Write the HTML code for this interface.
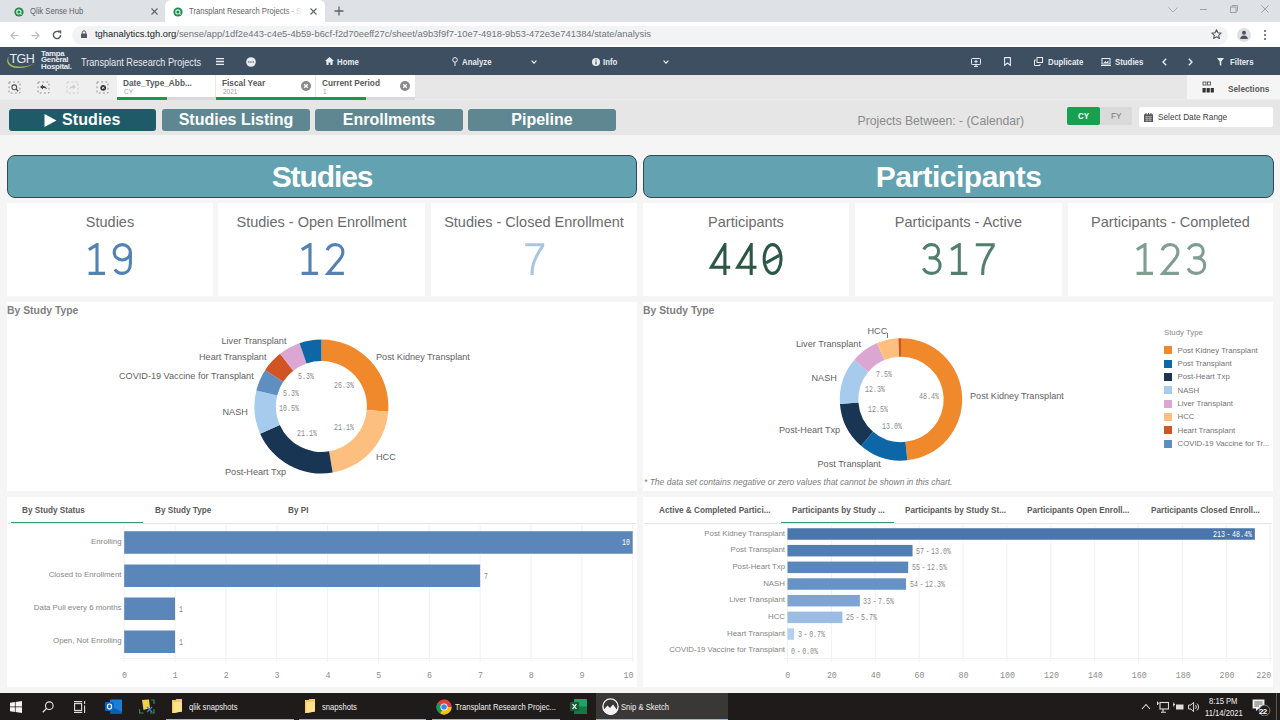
<!DOCTYPE html>
<html><head><meta charset="utf-8">
<style>
*{box-sizing:border-box;margin:0;padding:0}
html,body{width:1280px;height:720px;overflow:hidden;background:#f5f5f5;font-family:"Liberation Sans",sans-serif;position:relative}
.a{position:absolute}
.nw{white-space:nowrap}
.cz2{transform:scaleX(0.87);transform-origin:0 0}
.hx{top:56.8px;font-size:9px;font-weight:bold;color:#e8ecf0;transform:scaleX(0.87);transform-origin:0 0}
.st{top:78px;font-size:9px;font-weight:bold;color:#595959;transform:scaleX(0.92);transform-origin:0 0}
.sv{top:87.6px;font-size:6.5px;color:#a0a0a0}
.bst{font-size:10.4px;font-weight:bold;color:#7f7f7f;margin-top:1.5px}
.dl{font-size:9.15px;color:#626262;margin-top:1px}
.dp{font-family:"Liberation Mono",monospace;font-size:8.3px;color:#8a8a8a;transform:scaleX(0.8);transform-origin:0 0;margin-top:0.3px}
.lgt{font-size:7.8px;color:#8a8a8a}
.lgi{font-size:7.8px;color:#737373}
.tb{font-size:9px;font-weight:bold;color:#595959;transform:scaleX(0.91);transform-origin:0 0}
.bl{font-size:7.85px;color:#858585}
.bv{font-family:"Liberation Mono",monospace;font-size:8.3px;color:#8a8a8a;transform:scaleX(0.8);transform-origin:0 0;word-spacing:-3px;margin-top:-0.6px}
.ax{font-family:"Liberation Mono",monospace;font-size:8.3px;color:#8c8c8c;margin-top:-0.5px}
.tk{top:701.5px;font-size:9px;color:#f0f0f0;transform:scaleX(0.85);transform-origin:0 0}
.cz{transform:scaleX(0.85);transform-origin:0 0}
/* chrome */
#tabs{left:0;top:0;width:1280px;height:22px;background:#dee1e6}
#addr{left:0;top:22px;width:1280px;height:25px;background:#fff}
#qhead{left:0;top:47px;width:1280px;height:28px;background:#3e4f62}
#selbar{left:0;top:75px;width:1280px;height:25px;background:#e7e7e7;border-bottom:1px solid #ececec}
#band{left:0;top:100px;width:1280px;height:35px;background:#e6e6e6}
#task{left:0;top:693px;width:1280px;height:27px;background:#1f1b1b}
.navbtn{top:109px;height:22px;border-radius:3px;background:#5e8791;color:#fff;font-weight:bold;font-size:16px;text-align:center;line-height:22px;letter-spacing:0}
.hdr{top:155px;height:43px;background:#62a2b1;border:1px solid #34494f;border-radius:8px;color:#fff;font-weight:bold;font-size:30px;text-align:center;line-height:41px;letter-spacing:-1.1px}
.card{background:#fff}
.kt{font-size:14.5px;color:#6b6b6b;text-align:center;width:100%;top:11.3px}
.kv{font-family:"Liberation Mono",monospace;font-size:44px;text-align:center;width:100%;top:32px}
</style></head><body>
<div id="tabs" class="a"></div>
<div id="addr" class="a"></div>

<!-- browser tabs -->
<svg class="a" style="left:14px;top:7px" width="10" height="10" viewBox="0 0 10 10"><circle cx="5" cy="5" r="4.6" fill="#1f8a4c"/><circle cx="4.9" cy="4.9" r="2.1" fill="none" stroke="#d8f0df" stroke-width="1.2"/><path d="M6.2 6.2L7.6 7.6" stroke="#d8f0df" stroke-width="1.2"/></svg>
<div class="a nw cz" style="left:30px;top:6px;font-size:9px;color:#5f6368">Qlik Sense Hub</div>
<svg class="a" style="left:151px;top:8px" width="7" height="7" viewBox="0 0 7 7"><path d="M0.5 0.5L6.5 6.5M6.5 0.5L0.5 6.5" stroke="#5f6368" stroke-width="1.1"/></svg>
<div class="a" style="left:165px;top:0;width:160px;height:23px;background:#fff;border-radius:6px 6px 0 0"></div>
<svg class="a" style="left:173px;top:7px" width="10" height="10" viewBox="0 0 10 10"><circle cx="5" cy="5" r="4.6" fill="#1f8a4c"/><circle cx="4.9" cy="4.9" r="2.1" fill="none" stroke="#d8f0df" stroke-width="1.2"/><path d="M6.2 6.2L7.6 7.6" stroke="#d8f0df" stroke-width="1.2"/></svg>
<div class="a nw cz" style="left:189px;top:6px;font-size:9px;color:#5f6368">Transplant Research Projects - St</div>
<div class="a" style="left:285px;top:2px;width:22px;height:18px;background:linear-gradient(90deg,rgba(255,255,255,0),#fff 80%)"></div>
<svg class="a" style="left:310px;top:8px" width="7" height="7" viewBox="0 0 7 7"><path d="M0.5 0.5L6.5 6.5M6.5 0.5L0.5 6.5" stroke="#5f6368" stroke-width="1.1"/></svg>
<svg class="a" style="left:334px;top:6px" width="10" height="10" viewBox="0 0 10 10"><path d="M5 0.5V9.5M0.5 5H9.5" stroke="#5f6368" stroke-width="1.3"/></svg>
<svg class="a" style="left:1168px;top:7px" width="10" height="6" viewBox="0 0 10 6"><path d="M0.5 0.5L5 5L9.5 0.5" fill="none" stroke="#a6abb0" stroke-width="1"/></svg>
<div class="a" style="left:1200px;top:9px;width:7px;height:1px;background:#9ea2a7"></div>
<svg class="a" style="left:1230px;top:5px" width="8" height="8" viewBox="0 0 8 8"><rect x="0.5" y="2" width="5.5" height="5.5" fill="none" stroke="#9ea2a7" stroke-width="1"/><path d="M2 2V0.5H7.5V6H6" fill="none" stroke="#9ea2a7" stroke-width="1"/></svg>
<svg class="a" style="left:1261px;top:5px" width="8" height="8" viewBox="0 0 8 8"><path d="M0.5 0.5L7.5 7.5M7.5 0.5L0.5 7.5" stroke="#9ea2a7" stroke-width="1"/></svg>
<!-- address -->
<svg class="a" style="left:10px;top:31px" width="9" height="9" viewBox="0 0 9 9"><path d="M8.5 4.5H1M4.5 1L1 4.5L4.5 8" fill="none" stroke="#b8bbbf" stroke-width="1.2"/></svg>
<svg class="a" style="left:31px;top:31px" width="9" height="9" viewBox="0 0 9 9"><path d="M0.5 4.5H8M4.5 1L8 4.5L4.5 8" fill="none" stroke="#b8bbbf" stroke-width="1.2"/></svg>
<svg class="a" style="left:52px;top:30px" width="10" height="10" viewBox="0 0 10 10"><path d="M8.6 5A3.6 3.6 0 1 1 7.4 2.3" fill="none" stroke="#55585c" stroke-width="1.4"/><path d="M5.6 0.6H9.2V4.2Z" fill="#55585c"/></svg>
<div class="a" style="left:72px;top:25.5px;width:1156px;height:19.5px;border-radius:10px;background:#f1f3f4"></div>
<svg class="a" style="left:81px;top:30px" width="6" height="8" viewBox="0 0 6 8"><path d="M1.4 3.6V2.4A1.6 1.6 0 0 1 4.6 2.4V3.6" fill="none" stroke="#55585c" stroke-width="1"/><rect x="0" y="3.5" width="6" height="4.5" rx="0.6" fill="#55585c"/></svg>
<div class="a nw" id="url" style="left:95px;top:28px;font-size:9.4px;color:#202124">tghanalytics.tgh.org<span style="color:#717478">/sense/app/1df2e443-c4e5-4b59-b6cf-f2d70eeff27c/sheet/a9b3f9f7-10e7-4918-9b53-472e3e741384/state/analysis</span></div>
<svg class="a" style="left:1211px;top:29px" width="11" height="11" viewBox="0 0 11 11"><path d="M5.5 0.8L6.9 3.8L10.1 4.1L7.7 6.3L8.4 9.5L5.5 7.8L2.6 9.5L3.3 6.3L0.9 4.1L4.1 3.8Z" fill="none" stroke="#55585c" stroke-width="1.1" stroke-linejoin="round"/></svg>
<div class="a" style="left:1237px;top:28px;width:14px;height:14px;border-radius:50%;background:#dde1e6"></div>
<svg class="a" style="left:1239px;top:30px" width="10" height="10" viewBox="0 0 10 10"><circle cx="5" cy="2.8" r="2" fill="#4f5358"/><path d="M1.2 9C1.2 6.8 2.8 5.6 5 5.6S8.8 6.8 8.8 9Z" fill="#4f5358"/></svg>
<div class="a" style="left:1264px;top:30px;width:2.4px;height:2.4px;border-radius:50%;background:#55585c"></div>
<div class="a" style="left:1264px;top:34px;width:2.4px;height:2.4px;border-radius:50%;background:#55585c"></div>
<div class="a" style="left:1264px;top:37.6px;width:2.4px;height:2.4px;border-radius:50%;background:#55585c"></div>
<div id="qhead" class="a"></div>
<!-- qlik header -->
<svg class="a" style="left:5px;top:52px" width="32" height="18" viewBox="0 0 32 18"><path d="M3.8 4C0 9.5 3 15.8 12.5 16C19.5 16.2 25 14.5 28.5 11.5C24.5 14 18.5 14.9 12.5 14.6C5 14.2 1.8 9.5 3.8 4Z" fill="#a9bc52"/></svg>
<div class="a nw" style="left:9.5px;top:52px;font-size:12.5px;color:#e8ecf0;letter-spacing:-0.6px;font-weight:normal">TGH</div>
<div class="a" style="left:41px;top:50.5px;font-size:7.8px;line-height:6.8px;color:#e8ecf0;font-weight:bold;letter-spacing:-0.25px">Tampa<br>General<br>Hospital.</div>
<div class="a nw cz2" style="left:81px;top:56px;font-size:10.5px;color:#e6eaee">Transplant Research Projects</div>
<svg class="a" style="left:216px;top:58px" width="8" height="7" viewBox="0 0 8 7"><path d="M0 0.7H8M0 3.5H8M0 6.3H8" stroke="#e8ecf0" stroke-width="1.3"/></svg>
<svg class="a" style="left:246.3px;top:56.5px" width="10" height="10" viewBox="0 0 10 10"><circle cx="5" cy="5" r="4.8" fill="#e8ecf0"/><circle cx="2.8" cy="5" r="0.7" fill="#3e4f62"/><circle cx="5" cy="5" r="0.7" fill="#3e4f62"/><circle cx="7.2" cy="5" r="0.7" fill="#3e4f62"/></svg>
<svg class="a" style="left:325px;top:57px" width="9" height="8" viewBox="0 0 9 8"><path d="M4.5 0L9 4H7.6V8H5.4V5.6H3.6V8H1.4V4H0Z" fill="#e8ecf0"/></svg>
<div class="a nw hx" style="left:337px">Home</div>
<svg class="a" style="left:451.5px;top:57px" width="6" height="9" viewBox="0 0 6 9"><circle cx="3" cy="2.9" r="2.3" fill="none" stroke="#e8ecf0" stroke-width="1"/><path d="M3 5.2V9" stroke="#e8ecf0" stroke-width="1"/></svg>
<div class="a nw hx" style="left:462px">Analyze</div>
<svg class="a" style="left:530.5px;top:59.5px" width="6" height="4" viewBox="0 0 6 4"><path d="M0.6 0.6L3 3.2L5.4 0.6" fill="none" stroke="#e8ecf0" stroke-width="1.2"/></svg>
<svg class="a" style="left:591.5px;top:57.5px" width="8" height="8" viewBox="0 0 8 8"><circle cx="4" cy="4" r="4" fill="#e8ecf0"/><path d="M4 3.4V6.4" stroke="#3e4f62" stroke-width="1.2"/><circle cx="4" cy="2" r="0.65" fill="#3e4f62"/></svg>
<div class="a nw hx" style="left:603px">Info</div>
<svg class="a" style="left:663px;top:59.5px" width="6" height="4" viewBox="0 0 6 4"><path d="M0.6 0.6L3 3.2L5.4 0.6" fill="none" stroke="#e8ecf0" stroke-width="1.2"/></svg>
<svg class="a" style="left:970.5px;top:57.5px" width="10" height="9" viewBox="0 0 10 9"><rect x="0.5" y="0.5" width="9" height="6" rx="0.8" fill="none" stroke="#e8ecf0" stroke-width="1"/><path d="M5 1.8V5.2M3.3 3.5H6.7M3 8.5H7M5 6.5V8.5" stroke="#e8ecf0" stroke-width="1"/></svg>
<svg class="a" style="left:1003.5px;top:57.3px" width="7" height="9" viewBox="0 0 7 9"><path d="M0.6 0.6H6.4V8.4L3.5 6L0.6 8.4Z" fill="none" stroke="#e8ecf0" stroke-width="1.1" stroke-linejoin="round"/></svg>
<svg class="a" style="left:1033.5px;top:57px" width="9" height="9" viewBox="0 0 9 9"><rect x="3" y="0.5" width="5.5" height="5" fill="none" stroke="#e8ecf0" stroke-width="1"/><path d="M2 3H0.5V8.5H6V7" fill="none" stroke="#e8ecf0" stroke-width="1"/></svg>
<div class="a nw hx" style="left:1048px">Duplicate</div>
<svg class="a" style="left:1100.5px;top:57.5px" width="10" height="8" viewBox="0 0 10 8"><rect x="1" y="0.5" width="8" height="5.5" fill="none" stroke="#e8ecf0" stroke-width="1"/><path d="M0 7.5H10" stroke="#e8ecf0" stroke-width="1"/><path d="M2.5 5L4.5 3L5.7 4.2L7.4 2.5V5Z" fill="#e8ecf0"/></svg>
<div class="a nw hx" style="left:1115px">Studies</div>
<svg class="a" style="left:1161.5px;top:57.5px" width="5" height="8" viewBox="0 0 5 8"><path d="M4.2 0.7L1 4L4.2 7.3" fill="none" stroke="#e8ecf0" stroke-width="1.4"/></svg>
<svg class="a" style="left:1187.5px;top:57.5px" width="5" height="8" viewBox="0 0 5 8"><path d="M0.8 0.7L4 4L0.8 7.3" fill="none" stroke="#e8ecf0" stroke-width="1.4"/></svg>
<svg class="a" style="left:1217px;top:58px" width="7" height="8" viewBox="0 0 7 8"><path d="M0 0H7L4.3 3.6V8L2.7 6.8V3.6Z" fill="#e8ecf0"/></svg>
<div class="a nw hx" style="left:1230px">Filters</div>

<div id="selbar" class="a"></div>
<!-- selection bar -->
<div class="a" style="left:0;top:75px;width:117px;height:24px;background:#efefef"></div>
<svg class="a" style="left:8px;top:81px" width="13" height="13" viewBox="0 0 13 13"><rect x="1" y="1" width="11" height="11" fill="none" stroke="#8f8f8f" stroke-width="1" stroke-dasharray="1.8 2.4"/><circle cx="6.3" cy="6.3" r="2.4" fill="none" stroke="#555" stroke-width="1.1"/><path d="M8 8L10.3 10.3" stroke="#555" stroke-width="1.3"/></svg>
<svg class="a" style="left:37px;top:81px" width="13" height="13" viewBox="0 0 13 13"><rect x="1" y="1" width="11" height="11" fill="none" stroke="#8f8f8f" stroke-width="1" stroke-dasharray="1.8 2.4"/><path d="M3 6L6 3.6V5C8 5 9.5 6 10 8.2C9 7.2 7.8 6.9 6 6.9V8.4Z" fill="#444"/></svg>
<svg class="a" style="left:66px;top:81px" width="13" height="13" viewBox="0 0 13 13"><rect x="1" y="1" width="11" height="11" fill="none" stroke="#d0d0d0" stroke-width="1.2" stroke-dasharray="2 2.2"/><path d="M10 6L7 3.6V5C5 5 3.5 6 3 8.2C4 7.2 5.2 6.9 7 6.9V8.4Z" fill="#cfcfcf"/></svg>
<svg class="a" style="left:96px;top:81px" width="13" height="13" viewBox="0 0 13 13"><rect x="1" y="1" width="11" height="11" fill="none" stroke="#8f8f8f" stroke-width="1" stroke-dasharray="1.8 2.4"/><circle cx="7.2" cy="6.8" r="2.9" fill="#3a3a3a"/><path d="M6.2 5.8L8.2 7.8M8.2 5.8L6.2 7.8" stroke="#f2f2f2" stroke-width="0.9"/></svg>
<div class="a" style="left:117px;top:75px;width:99px;height:23px;background:#fff;border-right:1px solid #e8e8e8"></div>
<div class="a" style="left:216px;top:75px;width:100px;height:23px;background:#fff;border-right:1px solid #e8e8e8"></div>
<div class="a" style="left:316px;top:75px;width:99px;height:23px;background:#fff"></div>
<div class="a" style="left:117px;top:97px;width:99px;height:2.5px;background:#d9d9d9"></div>
<div class="a" style="left:117px;top:97px;width:50px;height:2.5px;background:#139a4a"></div>
<div class="a" style="left:216px;top:97px;width:100px;height:2.5px;background:#139a4a"></div>
<div class="a" style="left:316px;top:97px;width:99px;height:2.5px;background:#d9d9d9"></div>
<div class="a" style="left:316px;top:97px;width:50px;height:2.5px;background:#139a4a"></div>
<div class="a nw st" style="left:123px">Date_Type_Abb...</div><div class="a nw sv" style="left:124px">CY</div>
<div class="a nw st" style="left:222px">Fiscal Year</div><div class="a nw sv" style="left:223px">2021</div>
<div class="a nw st" style="left:322px">Current Period</div><div class="a nw sv" style="left:323px">1</div>
<svg class="a" style="left:300.7px;top:81.4px" width="10" height="10" viewBox="0 0 10 10"><circle cx="5" cy="5" r="5" fill="#8a8a8a"/><path d="M3.2 3.2L6.8 6.8M6.8 3.2L3.2 6.8" stroke="#fff" stroke-width="1.3"/></svg>
<svg class="a" style="left:399.7px;top:81.4px" width="10" height="10" viewBox="0 0 10 10"><circle cx="5" cy="5" r="5" fill="#8a8a8a"/><path d="M3.2 3.2L6.8 6.8M6.8 3.2L3.2 6.8" stroke="#fff" stroke-width="1.3"/></svg>
<div class="a" style="left:1187px;top:75px;width:93px;height:24px;background:#f5f5f5"></div>
<svg class="a" style="left:1202px;top:81px" width="12" height="12" viewBox="0 0 12 12"><rect x="1" y="1" width="3" height="3" fill="none" stroke="#555" stroke-width="0.9"/><rect x="5.5" y="1" width="3" height="3" fill="none" stroke="#555" stroke-width="0.9"/><rect x="0.5" y="7" width="3.2" height="4.5" fill="#333"/><rect x="4.6" y="7" width="3.2" height="4.5" fill="#333"/><rect x="8.7" y="7" width="3.2" height="4.5" fill="#333"/></svg>
<div class="a nw" style="left:1228px;top:83px;font-size:9.5px;color:#595959;font-weight:bold;transform:scaleX(0.87);transform-origin:0 0">Selections</div>

<div id="band" class="a"></div>
<div class="a nw" style="left:857.5px;top:114px;font-size:12.2px;color:#8a8a8a">Projects Between: - (Calendar)</div>
<div class="a" style="left:1067px;top:107px;width:32.5px;height:17.5px;background:#16a04f;border-radius:2px"></div>
<div class="a" style="left:1099.5px;top:107px;width:32px;height:17.5px;background:#dadada;border-radius:0 2px 2px 0"></div>
<div class="a nw" style="left:1077.5px;top:111px;font-size:8.6px;font-weight:bold;color:#fff;transform:scaleX(0.93);transform-origin:0 0">CY</div>
<div class="a nw" style="left:1110.5px;top:111px;font-size:8.8px;color:#777;transform:scaleX(0.93);transform-origin:0 0">FY</div>
<div class="a" style="left:1138.5px;top:107px;width:134.5px;height:19.5px;background:#fff;border-radius:2px"></div>
<svg class="a" style="left:1144px;top:112.5px" width="9" height="9" viewBox="0 0 9 9"><rect x="0" y="1.2" width="9" height="7.8" rx="0.6" fill="#555"/><path d="M2 0V2.2M4.5 0V2.2M7 0V2.2" stroke="#555" stroke-width="1"/><path d="M1 3.6H8M1 5.4H8M1 7.2H8M3 3V8.6M6 3V8.6" stroke="#ddd" stroke-width="0.5"/></svg>
<div class="a nw" style="left:1157.5px;top:111.5px;font-size:9px;color:#404040;transform:scaleX(0.915);transform-origin:0 0">Select Date Range</div>


<div class="a navbtn" style="left:9px;width:147px;background:#1e5a68"></div><svg class="a" style="left:44px;top:114px" width="13" height="13" viewBox="0 0 13 13"><path d="M0.5 0L12.5 6.5L0.5 13Z" fill="#fff"/></svg><div class="a nw" style="left:62px;top:109px;line-height:22px;font-size:16px;font-weight:bold;color:#fff;letter-spacing:0.1px">Studies</div>
<div class="a navbtn" style="left:162px;width:148px">Studies Listing</div>
<div class="a navbtn" style="left:315px;width:148px">Enrollments</div>
<div class="a navbtn" style="left:468px;width:148px">Pipeline</div>

<div class="a hdr" style="left:7px;width:630px">Studies</div>
<div class="a hdr" style="left:643px;width:631px;letter-spacing:-0.5px">Participants</div>

<div class="a card" style="left:7px;top:203px;width:206px;height:93px"><div class="a kt">Studies</div></div>
<div class="a card" style="left:218px;top:203px;width:207px;height:93px"><div class="a kt">Studies - Open Enrollment</div></div>
<div class="a card" style="left:431px;top:203px;width:206px;height:93px"><div class="a kt">Studies - Closed Enrollment</div></div>
<div class="a card" style="left:643px;top:203px;width:206px;height:93px"><div class="a kt">Participants</div></div>
<div class="a card" style="left:855px;top:203px;width:207px;height:93px"><div class="a kt">Participants - Active</div></div>
<div class="a card" style="left:1068px;top:203px;width:205px;height:93px"><div class="a kt">Participants - Completed</div></div>

<svg class="a" style="left:83.3px;top:243px" width="52.6" height="34" viewBox="0 0 52.6 34"><g fill="none" stroke="#5381b3" stroke-width="3.1"><g transform="translate(0.0 0)"><path d="M5.8 6.6L14 1.6V30.4M5.6 30.4H22"/></g><g transform="translate(26.3 0)"><ellipse cx="13" cy="9.3" rx="8.1" ry="7.7"/><path d="M21.1 9.3V20.5C21.1 26.8 17.8 30.4 12.8 30.4C9.6 30.4 7.2 29 5.6 26.4"/></g></g></svg>
<svg class="a" style="left:295.5px;top:243px" width="52.6" height="34" viewBox="0 0 52.6 34"><g fill="none" stroke="#5381b3" stroke-width="3.1"><g transform="translate(0.0 0)"><path d="M5.8 6.6L14 1.6V30.4M5.6 30.4H22"/></g><g transform="translate(26.3 0)"><path d="M4.9 7.2C6.2 3.6 9 1.6 13 1.6C17.8 1.6 20.6 4.8 20.6 9C20.6 12.8 18.6 15.3 15.6 18.6L5.6 30.4H21.6"/></g></g></svg>
<svg class="a" style="left:520.9px;top:243px" width="26.3" height="34" viewBox="0 0 26.3 34"><g fill="none" stroke="#a9c5e0" stroke-width="3.1"><g transform="translate(0.0 0)"><path d="M4.2 1.8H21.6V3.2C17.6 9 13.2 16.5 11.8 23C11.2 25.8 11.1 28.6 11.1 32"/></g></g></svg>
<svg class="a" style="left:706.8px;top:243px" width="78.9" height="34" viewBox="0 0 78.9 34"><g fill="none" stroke="#2c5646" stroke-width="3.1"><g transform="translate(0.0 0)"><path d="M17.9 32V1.8L4.4 24.2H23.2"/></g><g transform="translate(26.3 0)"><path d="M17.9 32V1.8L4.4 24.2H23.2"/></g><g transform="translate(52.6 0)"><ellipse cx="13" cy="16" rx="8.45" ry="14.4"/><path d="M6.4 19.9L19.7 12.3"/></g></g></svg>
<svg class="a" style="left:919.0px;top:243px" width="78.9" height="34" viewBox="0 0 78.9 34"><g fill="none" stroke="#527f6d" stroke-width="3.1"><g transform="translate(0.0 0)"><path d="M4.7 6.4C6.4 3.3 9.1 1.6 12.6 1.6C17 1.6 19.6 4.5 19.6 8.1C19.6 12.2 16.6 14.9 12.2 14.9H9.6M12.2 14.9C17.6 14.9 21.1 17.8 21.1 22.3C21.1 27.3 17.6 30.4 12.6 30.4C8.9 30.4 6 28.7 4.4 25.4"/></g><g transform="translate(26.3 0)"><path d="M5.8 6.6L14 1.6V30.4M5.6 30.4H22"/></g><g transform="translate(52.6 0)"><path d="M4.2 1.8H21.6V3.2C17.6 9 13.2 16.5 11.8 23C11.2 25.8 11.1 28.6 11.1 32"/></g></g></svg>
<svg class="a" style="left:1131.0px;top:243px" width="78.9" height="34" viewBox="0 0 78.9 34"><g fill="none" stroke="#7f9d91" stroke-width="3.1"><g transform="translate(0.0 0)"><path d="M5.8 6.6L14 1.6V30.4M5.6 30.4H22"/></g><g transform="translate(26.3 0)"><path d="M4.9 7.2C6.2 3.6 9 1.6 13 1.6C17.8 1.6 20.6 4.8 20.6 9C20.6 12.8 18.6 15.3 15.6 18.6L5.6 30.4H21.6"/></g><g transform="translate(52.6 0)"><path d="M4.7 6.4C6.4 3.3 9.1 1.6 12.6 1.6C17 1.6 19.6 4.5 19.6 8.1C19.6 12.2 16.6 14.9 12.2 14.9H9.6M12.2 14.9C17.6 14.9 21.1 17.8 21.1 22.3C21.1 27.3 17.6 30.4 12.6 30.4C8.9 30.4 6 28.7 4.4 25.4"/></g></g></svg>
<div class="a card" style="left:7px;top:302px;width:630px;height:189px"></div>
<div class="a card" style="left:643px;top:302px;width:630px;height:189px"></div>
<div class="a card" style="left:7px;top:497px;width:630px;height:190px"></div>
<div class="a card" style="left:643px;top:497px;width:630px;height:190px"></div>

<!-- donut cards -->
<div class="a nw bst" style="left:7px;top:303px">By Study Type</div>
<svg class="a" style="left:0;top:0" width="1280" height="720" viewBox="0 0 1280 720"><path d="M321.40 339.50A67 67 0 0 1 388.19 411.75L366.76 410.06A45.5 45.5 0 0 0 321.40 361.00Z" fill="#f0892c"/><path d="M388.19 411.75A67 67 0 0 1 332.69 472.54L329.07 451.35A45.5 45.5 0 0 0 366.76 410.06Z" fill="#fdbf80"/><path d="M332.69 472.54A67 67 0 0 1 260.14 433.64L279.80 424.93A45.5 45.5 0 0 0 329.07 451.35Z" fill="#183553"/><path d="M260.14 433.64A67 67 0 0 1 256.34 390.48L277.22 395.62A45.5 45.5 0 0 0 279.80 424.93Z" fill="#a7cbed"/><path d="M256.34 390.48A67 67 0 0 1 265.13 370.13L283.19 381.80A45.5 45.5 0 0 0 277.22 395.62Z" fill="#5e8fc0"/><path d="M265.13 370.13A67 67 0 0 1 280.07 353.76L293.33 370.69A45.5 45.5 0 0 0 283.19 381.80Z" fill="#d15424"/><path d="M280.07 353.76A67 67 0 0 1 299.54 343.17L306.56 363.49A45.5 45.5 0 0 0 293.33 370.69Z" fill="#dba6d2"/><path d="M299.54 343.17A67 67 0 0 1 321.40 339.50L321.40 361.00A45.5 45.5 0 0 0 306.56 363.49Z" fill="#0d66a6"/><path d="M901.00 338.20A61.2 61.2 0 0 1 907.33 460.27L905.41 441.87A42.7 42.7 0 0 0 901.00 356.70Z" fill="#f0892c"/><path d="M907.33 460.27A61.2 61.2 0 0 1 861.00 445.71L873.09 431.71A42.7 42.7 0 0 0 905.41 441.87Z" fill="#0d66a6"/><path d="M861.00 445.71A61.2 61.2 0 0 1 839.97 403.91L858.42 402.55A42.7 42.7 0 0 0 873.09 431.71Z" fill="#183553"/><path d="M839.97 403.91A61.2 61.2 0 0 1 854.12 360.05L868.29 371.95A42.7 42.7 0 0 0 858.42 402.55Z" fill="#a7cbed"/><path d="M854.12 360.05A61.2 61.2 0 0 1 877.07 343.07L884.30 360.10A42.7 42.7 0 0 0 868.29 371.95Z" fill="#dba6d2"/><path d="M877.07 343.07A61.2 61.2 0 0 1 898.31 338.26L899.12 356.74A42.7 42.7 0 0 0 884.30 360.10Z" fill="#fdbf80"/><path d="M898.31 338.26A61.2 61.2 0 0 1 901.00 338.20L901.00 356.70A42.7 42.7 0 0 0 899.12 356.74Z" fill="#d15424"/><path d="M887.5 333V338" stroke="#555" stroke-width="0.8"/></svg>
<div class="a nw dl" style="left:221.5px;top:335px">Liver Transplant</div><div class="a nw dl" style="left:199px;top:350.5px">Heart Transplant</div><div class="a nw dl" style="left:119px;top:370px">COVID-19 Vaccine for Transplant</div><div class="a nw dl" style="left:222.5px;top:405.5px">NASH</div><div class="a nw dl" style="left:225px;top:465.5px">Post-Heart Txp</div><div class="a nw dl" style="left:376px;top:350.5px">Post Kidney Transplant</div><div class="a nw dl" style="left:376px;top:450.5px">HCC</div>
<div class="a nw dp" style="left:297.5px;top:371.5px">5.3%</div><div class="a nw dp" style="left:333.5px;top:381px">26.3%</div><div class="a nw dp" style="left:283px;top:388.5px">5.3%</div><div class="a nw dp" style="left:279px;top:403.5px">10.5%</div><div class="a nw dp" style="left:333.5px;top:422.5px">21.1%</div><div class="a nw dp" style="left:296.5px;top:429px">21.1%</div>
<div class="a nw bst" style="left:643px;top:303px">By Study Type</div>
<div class="a nw dl" style="left:867.5px;top:325px">HCC</div><div class="a nw dl" style="left:796px;top:337.5px">Liver Transplant</div><div class="a nw dl" style="left:811.5px;top:371.5px">NASH</div><div class="a nw dl" style="left:779px;top:424px">Post-Heart Txp</div><div class="a nw dl" style="left:817.5px;top:458px">Post Transplant</div><div class="a nw dl" style="left:970px;top:390px">Post Kidney Transplant</div>
<div class="a nw dp" style="left:876px;top:370px">7.5%</div><div class="a nw dp" style="left:865px;top:385px">12.3%</div><div class="a nw dp" style="left:918.5px;top:391.5px">48.4%</div><div class="a nw dp" style="left:867.5px;top:405px">12.5%</div><div class="a nw dp" style="left:881.5px;top:421.5px">13.0%</div>
<div class="a nw lgt" style="left:1164px;top:328px">Study Type</div>
<div class="a" style="left:1164px;top:346.3px;width:8px;height:8px;background:#f0892c"></div><div class="a nw lgi" style="left:1177.5px;top:345.5px">Post Kidney Transplant</div>
<div class="a" style="left:1164px;top:359.7px;width:8px;height:8px;background:#0d66a6"></div><div class="a nw lgi" style="left:1177.5px;top:358.9px">Post Transplant</div>
<div class="a" style="left:1164px;top:373.0px;width:8px;height:8px;background:#183553"></div><div class="a nw lgi" style="left:1177.5px;top:372.2px">Post-Heart Txp</div>
<div class="a" style="left:1164px;top:386.4px;width:8px;height:8px;background:#a7cbed"></div><div class="a nw lgi" style="left:1177.5px;top:385.6px">NASH</div>
<div class="a" style="left:1164px;top:399.7px;width:8px;height:8px;background:#dba6d2"></div><div class="a nw lgi" style="left:1177.5px;top:398.9px">Liver Transplant</div>
<div class="a" style="left:1164px;top:413.1px;width:8px;height:8px;background:#fdbf80"></div><div class="a nw lgi" style="left:1177.5px;top:412.2px">HCC</div>
<div class="a" style="left:1164px;top:426.4px;width:8px;height:8px;background:#d15424"></div><div class="a nw lgi" style="left:1177.5px;top:425.6px">Heart Transplant</div>
<div class="a" style="left:1164px;top:439.8px;width:8px;height:8px;background:#5e8fc0"></div><div class="a nw lgi" style="left:1177.5px;top:438.9px">COVID-19 Vaccine for Tr...</div>
<div class="a nw" style="left:644px;top:477px;font-size:8.5px;font-style:italic;color:#7a7a7a">* The data set contains negative or zero values that cannot be shown in this chart.</div>
<!-- bar charts -->
<div class="a nw tb" style="left:21.5px;top:505px">By Study Status</div>
<div class="a nw tb" style="left:155px;top:505px">By Study Type</div>
<div class="a nw tb" style="left:288px;top:505px">By PI</div>
<div class="a" style="left:8px;top:523px;width:628px;height:1px;background:#e6e6e6"></div>
<div class="a" style="left:10.5px;top:521.6px;width:132.5px;height:1.8px;background:#3a9963"></div>
<div class="a nw tb" style="left:658.5px;top:505px">Active &amp; Completed Partici...</div>
<div class="a nw tb" style="left:791.5px;top:505px">Participants by Study ...</div>
<div class="a nw tb" style="left:905px;top:505px">Participants by Study St...</div>
<div class="a nw tb" style="left:1026.5px;top:505px">Participants Open Enroll...</div>
<div class="a nw tb" style="left:1151px;top:505px">Participants Closed Enroll...</div>
<div class="a" style="left:644px;top:523px;width:628px;height:1px;background:#e6e6e6"></div>
<div class="a" style="left:780.5px;top:521.6px;width:113px;height:1.8px;background:#3a9963"></div>
<svg class="a" style="left:0;top:0" width="1280" height="720" viewBox="0 0 1280 720"><path d="M124.20 525V662" stroke="#f1f1f1" stroke-width="1"/><path d="M175.05 525V662" stroke="#f1f1f1" stroke-width="1"/><path d="M225.90 525V662" stroke="#f1f1f1" stroke-width="1"/><path d="M276.75 525V662" stroke="#f1f1f1" stroke-width="1"/><path d="M327.60 525V662" stroke="#f1f1f1" stroke-width="1"/><path d="M378.45 525V662" stroke="#f1f1f1" stroke-width="1"/><path d="M429.30 525V662" stroke="#f1f1f1" stroke-width="1"/><path d="M480.15 525V662" stroke="#f1f1f1" stroke-width="1"/><path d="M531.00 525V662" stroke="#f1f1f1" stroke-width="1"/><path d="M581.85 525V662" stroke="#f1f1f1" stroke-width="1"/><path d="M632.70 525V662" stroke="#f1f1f1" stroke-width="1"/><path d="M120 658.5H634" stroke="#f1f1f1" stroke-width="1"/><rect x="124.2" y="531.25" width="508.50" height="22.5" fill="#5a86b9"/><rect x="124.2" y="564.5" width="355.95" height="22.5" fill="#5a86b9"/><rect x="124.2" y="597.5" width="50.85" height="22.5" fill="#5a86b9"/><rect x="124.2" y="630.5" width="50.85" height="22.5" fill="#5a86b9"/><path d="M787.50 525V662" stroke="#f1f1f1" stroke-width="1"/><path d="M831.38 525V662" stroke="#f1f1f1" stroke-width="1"/><path d="M875.26 525V662" stroke="#f1f1f1" stroke-width="1"/><path d="M919.14 525V662" stroke="#f1f1f1" stroke-width="1"/><path d="M963.02 525V662" stroke="#f1f1f1" stroke-width="1"/><path d="M1006.90 525V662" stroke="#f1f1f1" stroke-width="1"/><path d="M1050.78 525V662" stroke="#f1f1f1" stroke-width="1"/><path d="M1094.66 525V662" stroke="#f1f1f1" stroke-width="1"/><path d="M1138.54 525V662" stroke="#f1f1f1" stroke-width="1"/><path d="M1182.42 525V662" stroke="#f1f1f1" stroke-width="1"/><path d="M1226.30 525V662" stroke="#f1f1f1" stroke-width="1"/><path d="M1270.18 525V662" stroke="#f1f1f1" stroke-width="1"/><path d="M784 658.5H1272" stroke="#f1f1f1" stroke-width="1"/><rect x="787.5" y="528.25" width="467.32" height="11.5" fill="#4a76ab"/><rect x="787.5" y="544.92" width="125.06" height="11.5" fill="#507eb3"/><rect x="787.5" y="561.59" width="120.67" height="11.5" fill="#5a87bc"/><rect x="787.5" y="578.26" width="118.48" height="11.5" fill="#6792c5"/><rect x="787.5" y="594.93" width="72.40" height="11.5" fill="#7fa4d3"/><rect x="787.5" y="611.60" width="54.85" height="11.5" fill="#9cbde3"/><rect x="787.5" y="628.27" width="6.58" height="11.5" fill="#b4d0ef"/></svg>
<div class="a nw bl" style="right:1158.5px;top:537.0px">Enrolling</div>
<div class="a nw bv" style="left:622px;top:538.9px;color:#fff">10</div>
<div class="a nw bl" style="right:1158.5px;top:570.2px">Closed to Enrollment</div>
<div class="a nw bv" style="left:483.6px;top:572.2px">7</div>
<div class="a nw bl" style="right:1158.5px;top:603.2px">Data Pull every 6 months</div>
<div class="a nw bv" style="left:178.6px;top:605.2px">1</div>
<div class="a nw bl" style="right:1158.5px;top:636.2px">Open, Not Enrolling</div>
<div class="a nw bv" style="left:178.6px;top:638.2px">1</div>
<div class="a nw ax" style="left:122.0px;top:671.5px">0</div>
<div class="a nw ax" style="left:172.8px;top:671.5px">1</div>
<div class="a nw ax" style="left:223.7px;top:671.5px">2</div>
<div class="a nw ax" style="left:274.5px;top:671.5px">3</div>
<div class="a nw ax" style="left:325.4px;top:671.5px">4</div>
<div class="a nw ax" style="left:376.2px;top:671.5px">5</div>
<div class="a nw ax" style="left:427.1px;top:671.5px">6</div>
<div class="a nw ax" style="left:477.9px;top:671.5px">7</div>
<div class="a nw ax" style="left:528.8px;top:671.5px">8</div>
<div class="a nw ax" style="left:579.6px;top:671.5px">9</div>
<div class="a nw ax" style="left:623.5px;top:671.5px">10</div>
<div class="a nw bl" style="right:495px;top:528.5px">Post Kidney Transplant</div>
<div class="a nw bv" style="left:1213px;top:530.4px;color:#fff">213 - 48.4%</div>
<div class="a nw bl" style="right:495px;top:545.2px">Post Transplant</div>
<div class="a nw bv" style="left:916.1px;top:547.1px">57 - 13.0%</div>
<div class="a nw bl" style="right:495px;top:561.8px">Post-Heart Txp</div>
<div class="a nw bv" style="left:911.7px;top:563.7px">55 - 12.5%</div>
<div class="a nw bl" style="right:495px;top:578.5px">NASH</div>
<div class="a nw bv" style="left:909.5px;top:580.4px">54 - 12.3%</div>
<div class="a nw bl" style="right:495px;top:595.2px">Liver Transplant</div>
<div class="a nw bv" style="left:863.4px;top:597.1px">33 - 7.5%</div>
<div class="a nw bl" style="right:495px;top:611.9px">HCC</div>
<div class="a nw bv" style="left:845.9px;top:613.8px">25 - 5.7%</div>
<div class="a nw bl" style="right:495px;top:628.5px">Heart Transplant</div>
<div class="a nw bv" style="left:797.6px;top:630.4px">3 - 0.7%</div>
<div class="a nw bl" style="right:495px;top:645.2px">COVID-19 Vaccine for Transplant</div>
<div class="a nw bv" style="left:791.0px;top:647.1px">0 - 0.0%</div>
<div class="a nw ax" style="left:785.2px;top:671.5px">0</div>
<div class="a nw ax" style="left:826.9px;top:671.5px">20</div>
<div class="a nw ax" style="left:870.8px;top:671.5px">40</div>
<div class="a nw ax" style="left:914.6px;top:671.5px">60</div>
<div class="a nw ax" style="left:958.5px;top:671.5px">80</div>
<div class="a nw ax" style="left:1000.1px;top:671.5px">100</div>
<div class="a nw ax" style="left:1044.0px;top:671.5px">120</div>
<div class="a nw ax" style="left:1087.9px;top:671.5px">140</div>
<div class="a nw ax" style="left:1131.8px;top:671.5px">160</div>
<div class="a nw ax" style="left:1175.7px;top:671.5px">180</div>
<div class="a nw ax" style="left:1219.5px;top:671.5px">200</div>
<div class="a nw ax" style="left:1256.2px;top:671.5px">220</div>
<div id="task" class="a"></div>
<!-- taskbar -->
<svg class="a" style="left:10px;top:701px" width="12" height="12" viewBox="0 0 12 12"><path d="M0 1.7L4.9 1V5.6H0ZM5.6 0.9L12 0V5.6H5.6ZM0 6.3H4.9V11L0 10.3ZM5.6 6.3H12V12L5.6 11.1Z" fill="#f4f4f4"/></svg>
<svg class="a" style="left:42px;top:701px" width="12" height="12" viewBox="0 0 12 12"><circle cx="7.3" cy="4.7" r="3.8" fill="none" stroke="#e8e8e8" stroke-width="1.1"/><path d="M4.6 7.4L0.8 11.2" stroke="#e8e8e8" stroke-width="1.3"/></svg>
<svg class="a" style="left:74px;top:701px" width="12" height="12" viewBox="0 0 12 12"><rect x="0.6" y="2.6" width="7" height="6.8" fill="none" stroke="#e0e0e0" stroke-width="1.1"/><path d="M0 0.6H8.2M0 11.4H8.2M10.6 0V3M10.6 4.5V12" stroke="#e0e0e0" stroke-width="1.1"/></svg>
<svg class="a" style="left:105px;top:699px" width="17" height="15" viewBox="0 0 17 15"><rect x="5" y="0.5" width="12" height="14" rx="1" fill="#1c7fd6"/><path d="M5 7L17 13V14.5H5Z" fill="#0f5cb0"/><rect x="0" y="3" width="9" height="9" rx="1" fill="#0a64c2"/><ellipse cx="4.5" cy="7.5" rx="2.1" ry="2.5" fill="none" stroke="#fff" stroke-width="1.2"/></svg>
<svg class="a" style="left:139px;top:699px" width="16" height="15" viewBox="0 0 16 15"><path d="M3 1L10 0.5L11 9L4.5 11Z" fill="#f0d24a"/><path d="M0.5 10V14H4.5M11 14H15V10M15 5V1H12" fill="none" stroke="#2f8f5a" stroke-width="1.2"/><path d="M8 13L13 8M8 8L13 13" stroke="#3b7fd6" stroke-width="1.3"/></svg>
<svg class="a" style="left:172px;top:699px" width="10" height="14" viewBox="0 0 10 14"><path d="M0 1H3.5L4.5 0H10V12.5L1.5 14H0Z" fill="#f2cd5c"/><path d="M1.5 3H10V12.5L1.5 14Z" fill="#fbe38d"/></svg>
<div class="a nw tk" style="left:188.5px">qlik snapshots</div>
<div class="a" style="left:165.5px;top:718.5px;width:128px;height:1.5px;background:#90b9e2"></div>
<svg class="a" style="left:305px;top:699px" width="10" height="14" viewBox="0 0 10 14"><path d="M0 1H3.5L4.5 0H10V12.5L1.5 14H0Z" fill="#f2cd5c"/><path d="M1.5 3H10V12.5L1.5 14Z" fill="#fbe38d"/></svg>
<div class="a nw tk" style="left:321.5px">snapshots</div>
<div class="a" style="left:298.5px;top:718.5px;width:127.5px;height:1.5px;background:#90b9e2"></div>
<svg class="a" style="left:436px;top:698.5px" width="16" height="16" viewBox="0 0 16 16"><circle cx="8" cy="8" r="7.6" fill="#db4437"/><path d="M8 8L1.4 4.2A7.6 7.6 0 0 0 4.2 14.6Z" fill="#0f9d58"/><path d="M8 8L4.2 14.6A7.6 7.6 0 0 0 15.6 8Z" fill="#f4c20d"/><path d="M8 0.4A7.6 7.6 0 0 1 15.6 8H8Z" fill="#db4437"/><circle cx="8" cy="8" r="3.6" fill="#fff"/><circle cx="8" cy="8" r="2.8" fill="#4285f4"/></svg>
<div class="a nw tk" style="left:455px">Transplant Research Projec...</div>
<div class="a" style="left:432px;top:718.5px;width:127.5px;height:1.5px;background:#90b9e2"></div>
<svg class="a" style="left:570px;top:699px" width="17" height="15" viewBox="0 0 17 15"><rect x="4" y="0" width="13" height="15" rx="1" fill="#21a366"/><rect x="4" y="7.5" width="13" height="7.5" fill="#107c41"/><rect x="0" y="3" width="9" height="9" rx="1" fill="#185c37"/><path d="M2.6 5L6.4 10M6.4 5L2.6 10" stroke="#fff" stroke-width="1.2"/></svg>
<div class="a" style="left:596px;top:693px;width:131.5px;height:27px;background:#3a3737"></div>
<div class="a" style="left:596px;top:718.5px;width:131.5px;height:1.5px;background:#90b9e2"></div>
<svg class="a" style="left:602px;top:698px" width="17" height="17" viewBox="0 0 17 17"><circle cx="8.5" cy="8.5" r="7.6" fill="none" stroke="#f2f2f2" stroke-width="1.4"/><path d="M1.5 12L5.5 7.5L8 10L11 6.5L15.5 12.5A7.6 7.6 0 0 1 1.5 12Z" fill="#f2f2f2"/></svg>
<div class="a nw tk" style="left:620.75px">Snip &amp; Sketch</div>
<svg class="a" style="left:1141px;top:703px" width="10" height="7" viewBox="0 0 10 7"><path d="M1 6L5 1.5L9 6" fill="none" stroke="#dcdcdc" stroke-width="1.1"/></svg>
<svg class="a" style="left:1157px;top:701px" width="12" height="12" viewBox="0 0 12 12"><rect x="3" y="1.5" width="8.5" height="6.5" fill="none" stroke="#dcdcdc" stroke-width="1.1"/><path d="M0.5 0.5V4M0 2.2H2M6 8V11M4 11.3H9" stroke="#dcdcdc" stroke-width="1.1"/></svg>
<svg class="a" style="left:1173px;top:702px" width="11" height="9" viewBox="0 0 11 9"><rect x="3" y="2.5" width="7.5" height="5" fill="#dcdcdc"/><path d="M0.8 0.5V4.5M0 2.5H2" stroke="#dcdcdc" stroke-width="1"/></svg>
<svg class="a" style="left:1188px;top:701px" width="12" height="12" viewBox="0 0 12 12"><path d="M0.6 4H2.8L5.6 1.4V10.6L2.8 8H0.6Z" fill="none" stroke="#dcdcdc" stroke-width="1"/><path d="M7.4 4A2.6 2.6 0 0 1 7.4 8M9 2.6A4.5 4.5 0 0 1 9 9.4" fill="none" stroke="#dcdcdc" stroke-width="1"/></svg>
<div class="a nw tk" style="left:1209.4px;top:695.5px">8:15 PM</div>
<div class="a nw tk" style="left:1205px;top:708px">11/14/2021</div>
<svg class="a" style="left:1252px;top:699px" width="19" height="17" viewBox="0 0 19 17"><path d="M0.6 0.6H12.4V9.4H7L4 12V9.4H0.6Z" fill="#f0f0f0"/><path d="M2.5 3H10.5M2.5 5H10.5M2.5 7H7" stroke="#555" stroke-width="0.9"/><circle cx="12.5" cy="11.5" r="5.4" fill="#1f1b1b" stroke="#9a9a9a" stroke-width="0.8"/></svg>
<div class="a nw" style="left:1259px;top:707px;font-size:8px;color:#fff;font-weight:bold;letter-spacing:-0.6px">22</div>
<div class="a" style="left:1276px;top:693px;width:1px;height:27px;background:#5a5757"></div>

</body></html>
